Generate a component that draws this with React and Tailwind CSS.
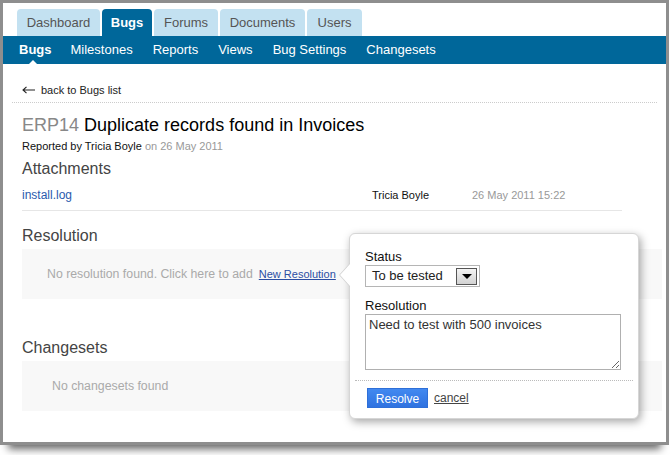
import React from 'react';

const tabs = [
  { label: 'Dashboard', w: 'w-[83px]' },
  { label: 'Bugs', w: 'w-[50px]' },
  { label: 'Forums', w: 'w-[64px]' },
  { label: 'Documents', w: 'w-[85px]' },
  { label: 'Users', w: 'w-[55px]' },
];
const subnav = ['Bugs', 'Milestones', 'Reports', 'Views', 'Bug Settings', 'Changesets'];

function StatusSelect() {
  return (
    <div className="flex items-center justify-between w-[115px] h-[22px] border border-[#b5b5b5] bg-white pl-[6px] pr-[2px]">
      <span className="text-[13px] text-[#222]">To be tested</span>
      <span className="flex items-center justify-center w-[21px] h-[17px] border border-[#555] bg-gradient-to-b from-[#f4f4f4] to-[#d2d2d2]">
        <span className="w-0 h-0 border-l-[5px] border-r-[5px] border-t-[5px] border-l-transparent border-r-transparent border-t-black" />
      </span>
    </div>
  );
}

function ResolvePopup() {
  return (
    <div className="absolute left-[346px] top-[230px] w-[290px] h-[186px] bg-white rounded-[6px] border border-[#d6d6d6] shadow-[2px_3px_8px_rgba(0,0,0,0.35)] px-[15px] pt-[15px]">
      {/* pointer */}
      <div className="absolute left-[-11px] top-[29px] w-0 h-0 border-t-[12px] border-b-[12px] border-r-[11px] border-t-transparent border-b-transparent border-r-[#d0d0d0]" />
      <div className="absolute left-[-10px] top-[30px] w-0 h-0 border-t-[11px] border-b-[11px] border-r-[10px] border-t-transparent border-b-transparent border-r-white" />
      <div className="text-[13px] leading-[15px] text-[#111]">Status</div>
      <div className="mt-px">
        <StatusSelect />
      </div>
      <div className="mt-[11px] text-[13px] leading-[15px] text-[#111]">Resolution</div>
      <textarea
        readOnly
        defaultValue="Need to test with 500 invoices"
        className="block mt-px w-[256px] h-[56px] border border-[#b0b0b0] px-[3px] py-[1px] text-[13px] leading-[17px] text-[#333] outline-none"
      />
      <div className="mx-[-10px] mt-[10px] border-t border-dotted border-[#bbb]" />
      <div className="flex items-center gap-[6px] mt-[7px] pl-[2px]">
        <button className="w-[61px] h-[20px] bg-gradient-to-b from-[#4289f0] to-[#2f72e0] text-white text-[12px] leading-[20px] border border-[#2e6fd8]">
          Resolve
        </button>
        <a className="text-[12px] text-[#444] underline">cancel</a>
      </div>
    </div>
  );
}

export default function App() {
  return (
    <div className="w-[670px] h-[455px] bg-white font-['Liberation_Sans',Arial,sans-serif]">
      <div className="relative w-[669px] h-[445px] border-[3px] border-[#8e8e8e] bg-white shadow-[0_12px_8px_-8px_rgba(0,0,0,0.6)]">
        {/* top tabs */}
        <div className="flex items-end gap-[2px] pl-[14px] pt-[6px] h-[33px]">
          {tabs.map((t) => (
            <div
              key={t.label}
              className={
                t.label === 'Bugs'
                  ? `${t.w} h-[27px] flex items-center justify-center rounded-t-[4px] bg-[#00679a] text-white font-bold text-[13px]`
                  : `${t.w} h-[27px] flex items-center justify-center rounded-t-[4px] bg-[#c3e1f1] text-[#555] text-[13px]`
              }
            >
              {t.label}
            </div>
          ))}
        </div>
        {/* sub navigation */}
        <div className="flex items-center h-[28px] bg-[#00679a] pl-[16px] gap-[20px]">
          {subnav.map((s, i) => (
            <div key={s} className={i === 0 ? 'relative h-full flex items-center text-white font-bold text-[13px] -mr-px' : 'text-white text-[13px]'}>
              {s}
              {i === 0 && (
                <span className="absolute bottom-0 left-[10px] w-0 h-0 border-l-[4px] border-r-[4px] border-b-[4px] border-l-transparent border-r-transparent border-b-white" />
              )}
            </div>
          ))}
        </div>

        {/* back link */}
        <div className="mx-[9px] mt-[18px] pb-[4px] border-b border-dotted border-[#ccc]">
          <div className="flex items-center gap-[6px] pl-[10px] text-[11px] leading-[16px] text-[#222]">
            <svg width="13" height="8" viewBox="0 0 13 8" className="text-[#222]">
              <path d="M1 4h12M4.5 0.8L1 4l3.5 3.2" fill="none" stroke="currentColor" strokeWidth="1.1" />
            </svg>
            <span>back to Bugs list</span>
          </div>
        </div>

        <div className="pl-[19px]">
          <div className="mt-[10px] text-[18px] leading-[24px]">
            <span className="text-[#888]">ERP14</span>{' '}
            <span className="text-black">Duplicate records found in Invoices</span>
          </div>
          <div className="mt-[2px] text-[11px] leading-[14px] text-[#111]">
            Reported by Tricia Boyle <span className="text-[#999]">on 26 May 2011</span>
          </div>
          <div className="mt-[6px] text-[16px] leading-[20px] text-[#444]">Attachments</div>
          <div className="w-[600px] mt-[8px] pb-[7px] border-b border-[#e6e6e6] flex items-center text-[11px] leading-[16px]">
            <a className="w-[350px] text-[12px] text-[#2a5aad]">install.log</a>
            <span className="w-[100px] text-[#111]">Tricia Boyle</span>
            <span className="text-[#999]">26 May 2011 15:22</span>
          </div>

          <div className="mt-[15px] text-[16px] leading-[20px] text-[#444]">Resolution</div>
          <div className="mt-[3px] mr-[4px] h-[50px] bg-[#f8f8f8] flex items-center pl-[25px] text-[12.3px] text-[#aaa]">
            No resolution found. Click here to add
            <a className="ml-[6px] text-[11px] text-[#2b4ea3] underline">New Resolution</a>
          </div>

          <div className="mt-[39px] text-[16px] leading-[20px] text-[#444]">Changesets</div>
          <div className="mt-[3px] mr-[4px] h-[50px] bg-[#f8f8f8] flex items-center pl-[30px] text-[12.3px] text-[#aaa]">
            No changesets found
          </div>
        </div>

        <ResolvePopup />
      </div>
    </div>
  );
}
